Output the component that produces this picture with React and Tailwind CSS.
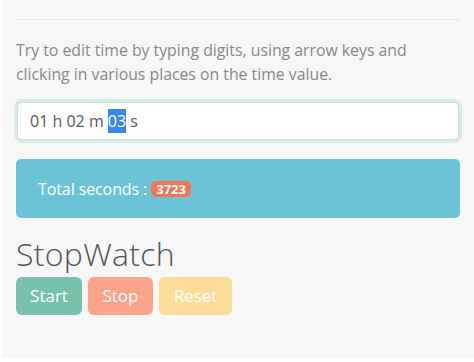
const buttons = [
  { label: "Start", className: "w-[66px] bg-[#78c2ad]" },
  { label: "Stop", className: "w-[65px] bg-[#fca48b]" },
  { label: "Reset", className: "w-[73px] bg-[#fcdc99]" },
];

const TimeInput = () => {
  return (
    <div className="mt-[16px] mx-[1px] h-[38px] flex items-center rounded-[5px] border border-[#c3e2d9] bg-white px-3 ring-[3px] ring-[#d9ebe5] text-[16px] text-[#5a5a5a]">
      <span className="whitespace-pre">01 h 02 m </span>
      <span className="bg-[#3b86ee] text-white">03</span>
      <span className="whitespace-pre"> s</span>
    </div>
  );
};

const StopWatch = () => {
  return (
    <div className="min-h-screen bg-white" style={{ fontFamily: '"Open Sans", "Liberation Sans", sans-serif' }}>
      <div className="ml-[2px] h-[358px] bg-[#f7f7f7] px-[14px] pt-[19px]">
        <hr className="border-t border-[#e5e5e5]" />
        <p className="mt-[18px] text-[15.8px] leading-6 text-[#888888]">
          Try to edit time by typing digits, using arrow keys and clicking in
          various places on the time value.
        </p>

        <TimeInput />

        <div className="mt-[19px] h-[59px] flex items-center rounded-[5px] bg-[#6cc3d5] px-[22px] text-[16px] text-white">
          <span className="tracking-[-0.1px]">Total seconds :</span>
          <span className="ml-[4px] rounded-[5px] bg-[#f47555] px-[5px] text-[13px] font-bold leading-4">
            3723
          </span>
        </div>

        <h2 className="mt-[16px] text-[32px] leading-[40px] font-light text-[#555555] tracking-[0.3px]">
          StopWatch
        </h2>

        <div className="mt-[3px] flex gap-[6px]">
          {buttons.map((b) => (
            <button
              key={b.label}
              className={`h-[38px] rounded-[6px] text-[17px] text-white ${b.className}`}
            >
              {b.label}
            </button>
          ))}
        </div>
      </div>
    </div>
  );
};

export default function App() {
  return <StopWatch />;
}
